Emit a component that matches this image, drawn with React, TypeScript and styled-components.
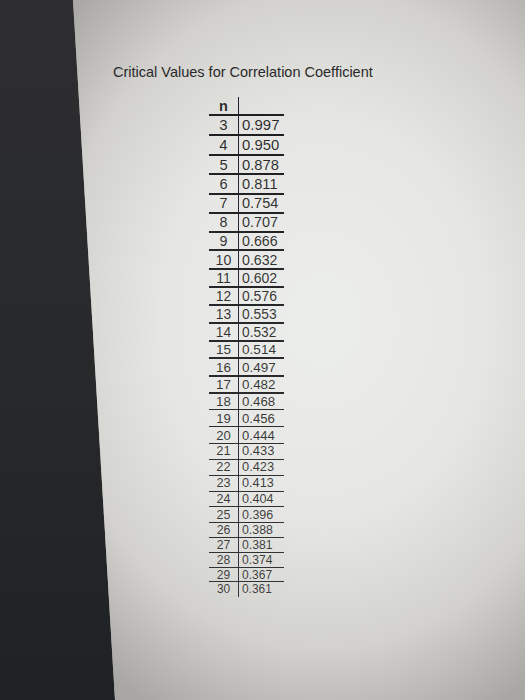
import { FC } from 'react';
import styled, { createGlobalStyle } from 'styled-components';

const GlobalStyle = createGlobalStyle`
  html, body {
    margin: 0;
    padding: 0;
    background: #27292b;
  }
  body {
    font-family: 'Liberation Sans', Arial, sans-serif;
  }
`;

const Desk = styled.div`
  width: 525px;
  height: 700px;
  overflow: hidden;
  display: flex;
  background: linear-gradient(180deg, #2e2e30 0%, #26282a 60%, #1f2224 100%);
`;

const Bezel = styled.div`
  width: 73px;
  flex-shrink: 0;
`;

const Screen = styled.div`
  flex: 1;
  clip-path: polygon(0 0, 100% 0, 100% 100%, 42px 100%);
  background:
    radial-gradient(ellipse 360px 440px at 250px 320px, #eceeec 0%, #e6e7e4 45%, #d2d1ce 75%, #a8a7a3 100%),
    #a09f9b;
  display: flex;
  flex-direction: column;
  padding: 64px 0 0 40px;
  box-sizing: border-box;
`;

const Title = styled.h1`
  margin: 0;
  font-size: 14.5px;
  line-height: 17px;
  font-weight: 400;
  color: #2a2a2a;
`;

const Table = styled.div`
  margin: 16px 0 0 96px;
  display: flex;
  flex-direction: column;
  width: 75px;
`;

const Row = styled.div<{ $h: number; $last?: boolean; $shade: number }>`
  display: grid;
  grid-template-columns: 29px 46px;
  height: ${(p) => p.$h}px;
  border-bottom: ${(p) => (p.$last ? 'none' : `${p.$h > 17 ? 2 : 1.5}px solid rgba(20, 20, 24, ${p.$shade})`)};
  box-sizing: border-box;
`;

const Cell = styled.div<{ $size: number; $value?: boolean; $bold?: boolean; $shade: number }>`
  display: flex;
  align-items: center;
  justify-content: ${(p) => (p.$value ? 'flex-start' : 'center')};
  padding-left: ${(p) => (p.$value ? 3 : 0)}px;
  border-left: ${(p) => (p.$value ? `1.5px solid rgba(22, 22, 40, ${p.$shade})` : 'none')};
  font-size: ${(p) => p.$size}px;
  font-weight: ${(p) => (p.$bold ? 700 : 400)};
  color: rgba(30, 30, 30, ${(p) => p.$shade});
  line-height: 1;
  padding-top: 1px;
`;

const values: [number, string][] = [
  [3, '0.997'],
  [4, '0.950'],
  [5, '0.878'],
  [6, '0.811'],
  [7, '0.754'],
  [8, '0.707'],
  [9, '0.666'],
  [10, '0.632'],
  [11, '0.602'],
  [12, '0.576'],
  [13, '0.553'],
  [14, '0.532'],
  [15, '0.514'],
  [16, '0.497'],
  [17, '0.482'],
  [18, '0.468'],
  [19, '0.456'],
  [20, '0.444'],
  [21, '0.433'],
  [22, '0.423'],
  [23, '0.413'],
  [24, '0.404'],
  [25, '0.396'],
  [26, '0.388'],
  [27, '0.381'],
  [28, '0.374'],
  [29, '0.367'],
  [30, '0.361'],
];

// the photo is taken at an angle, so rows shrink toward the bottom
const rowHeight = (i: number) => 19.95 - 0.205 * i;
const fontSize = (h: number) => 0.55 * h + 4;
const shade = (i: number) => 0.95 - i * 0.004;

const App: FC = () => {
  return (
    <>
      <GlobalStyle />
      <Desk>
        <Bezel />
        <Screen>
          <Title>Critical Values for Correlation Coefficient</Title>
          <Table>
            <Row $h={19} $shade={0.95}>
              <Cell $size={14.5} $bold $shade={0.95}>
                n
              </Cell>
              <Cell $size={14.5} $value $shade={0.95} />
            </Row>
            {values.map(([n, r], i) => {
              const h = rowHeight(i);
              return (
                <Row key={n} $h={h} $last={i === values.length - 1} $shade={shade(i)}>
                  <Cell $size={fontSize(h)} $shade={shade(i)}>
                    {n}
                  </Cell>
                  <Cell $size={fontSize(h)} $value $shade={shade(i)}>
                    {r}
                  </Cell>
                </Row>
              );
            })}
          </Table>
        </Screen>
      </Desk>
    </>
  );
};

export default App;
